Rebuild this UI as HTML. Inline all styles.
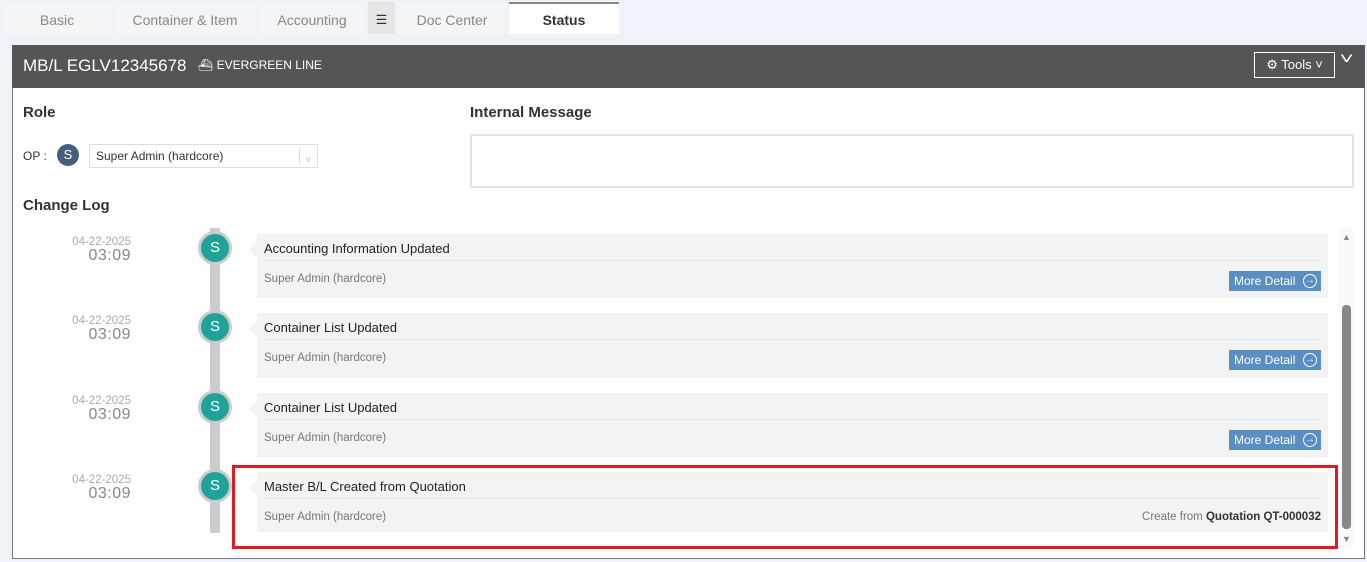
<!DOCTYPE html>
<html><head><meta charset="utf-8"><style>
*{box-sizing:border-box;margin:0;padding:0}
body{width:1367px;height:562px;background:#eef2f9;font-family:"Liberation Sans",sans-serif;position:relative;overflow:hidden;color:#333}
.a{position:absolute}
.tab{position:absolute;top:2px;height:32px;background:#f4f5f7;color:#888;font-size:14px;text-align:center;line-height:36px}
.panel{position:absolute;left:12px;top:45px;width:1353px;height:514px;background:#fff;border:1px solid #777;border-top:none}
.hdr{position:absolute;left:12px;top:45px;width:1353px;height:43px;background:#555}
.item{position:absolute;left:257px;width:1071px;background:#f3f3f3}
.item .t{position:absolute;left:7px;top:7px;font-size:13px;color:#222}
.item .ln{position:absolute;left:7px;right:7px;top:26px;border-top:1px solid #e6e6e6}
.item .u{position:absolute;left:7px;top:39px;font-size:11.5px;color:#777}
.item:before{content:"";position:absolute;left:-8px;top:8px;border:8px solid transparent;border-left:none;border-right-color:#f3f3f3}
.btn{position:absolute;right:7px;top:37px;height:20px;width:92px;background:#5a8fc3;color:#fff;font-size:12px;line-height:20px;padding-left:5px}
.btn span{position:absolute;right:4px;top:3px;width:14px;height:14px;border:1.3px solid #fff;border-radius:50%;font-size:10px;line-height:11px;text-align:center}
.dt{position:absolute;left:40px;width:91px;text-align:right;color:#aaa;font-size:11.5px}
.dt b{display:block;font-weight:normal;font-size:16px;color:#888;letter-spacing:0.5px;margin-top:-1px}
.c{position:absolute;left:198px;width:34px;height:34px;border-radius:50%;background:#1fa398;border:3px solid #ccc;color:#fff;font-size:15px;text-align:center;line-height:28px}
</style></head><body>
<div class="tab" style="left:2px;width:110px">Basic</div>
<div class="tab" style="left:114px;width:142px">Container &amp; Item</div>
<div class="tab" style="left:258px;width:108px">Accounting</div>
<div class="tab" style="left:368px;width:27px;background:#e6e6e6;color:#333;font-size:13px">☰</div>
<div class="tab" style="left:397px;width:110px">Doc Center</div>
<div class="tab" style="left:509px;width:110px;background:#fff;color:#333;font-weight:bold;border-top:2px solid #888;line-height:33px">Status</div>
<div class="panel"></div>
<div class="hdr">
 <div class="a" style="left:11px;top:11px;color:#fff;font-size:17px">MB/L EGLV12345678</div>
 <div class="a" style="left:186px;top:13px;color:#fff;font-size:12px">⛴ EVERGREEN LINE</div>
 <div class="a" style="left:1242px;top:7px;width:81px;height:26px;border:1px solid #fff;color:#fff;font-size:13px;line-height:24px;text-align:center">⚙ Tools ˅</div>
 <div class="a" style="left:1330px;top:6px;color:#fff;font-size:16px;transform:scaleX(1.5)">˅</div>
</div>
<div class="a" style="left:23px;top:104px;font-size:15px;font-weight:bold">Role</div>
<div class="a" style="left:23px;top:149px;font-size:12px">OP :</div>
<div class="a" style="left:57px;top:144px;width:22px;height:22px;border-radius:50%;background:#475d7c;color:#fff;font-size:13px;text-align:center;line-height:22px">S</div>
<div class="a" style="left:89px;top:144px;width:229px;height:24px;border:1px solid #ddd;font-size:12px;line-height:22px;padding-left:6px">Super Admin (hardcore)<span style="position:absolute;right:0;top:3px;width:18px;height:16px;border-left:1px solid #ddd;color:#bbb;font-size:9px;text-align:center">v</span></div>
<div class="a" style="left:470px;top:104px;font-size:15px;font-weight:bold">Internal Message</div>
<div class="a" style="left:470px;top:134px;width:884px;height:54px;border:2px solid #e4e4e4"></div>
<div class="a" style="left:23px;top:197px;font-size:15px;font-weight:bold">Change Log</div>
<div class="a" style="left:210px;top:228px;width:10px;height:305px;background:#ccc"></div>
<div class="a" style="left:1339px;top:228px;width:14px;height:320px;background:#fafafa"></div>
<div class="a" style="left:1342px;top:232px;color:#888;font-size:9px">▲</div>
<div class="a" style="left:1342px;top:305px;width:9px;height:224px;background:#888;border-radius:4px"></div>
<div class="a" style="left:1342px;top:534px;color:#888;font-size:9px">▼</div>

<div class="dt" style="top:236px">04-22-2025<b>03:09</b></div>
<div class="c" style="top:231px">S</div>
<div class="item" style="top:234px;height:64px"><div class="t">Accounting Information Updated</div><div class="ln"></div><div class="u">Super Admin (hardcore)</div><div class="btn">More Detail<span>→</span></div></div>

<div class="dt" style="top:315px">04-22-2025<b>03:09</b></div>
<div class="c" style="top:310px">S</div>
<div class="item" style="top:313px;height:65px"><div class="t">Container List Updated</div><div class="ln"></div><div class="u">Super Admin (hardcore)</div><div class="btn">More Detail<span>→</span></div></div>

<div class="dt" style="top:395px">04-22-2025<b>03:09</b></div>
<div class="c" style="top:390px">S</div>
<div class="item" style="top:393px;height:65px"><div class="t">Container List Updated</div><div class="ln"></div><div class="u">Super Admin (hardcore)</div><div class="btn">More Detail<span>→</span></div></div>

<div class="dt" style="top:474px">04-22-2025<b>03:09</b></div>
<div class="c" style="top:469px">S</div>
<div class="item" style="top:472px;height:60px"><div class="t">Master B/L Created from Quotation</div><div class="ln"></div><div class="u">Super Admin (hardcore)</div><div class="a" style="right:7px;top:39px;font-size:11.5px;color:#777">Create from <b style="color:#333">Quotation QT-000032</b></div></div>
<div class="a" style="left:232px;top:465px;width:1106px;height:84px;border:3px solid #e01b22"></div>
</body></html>
